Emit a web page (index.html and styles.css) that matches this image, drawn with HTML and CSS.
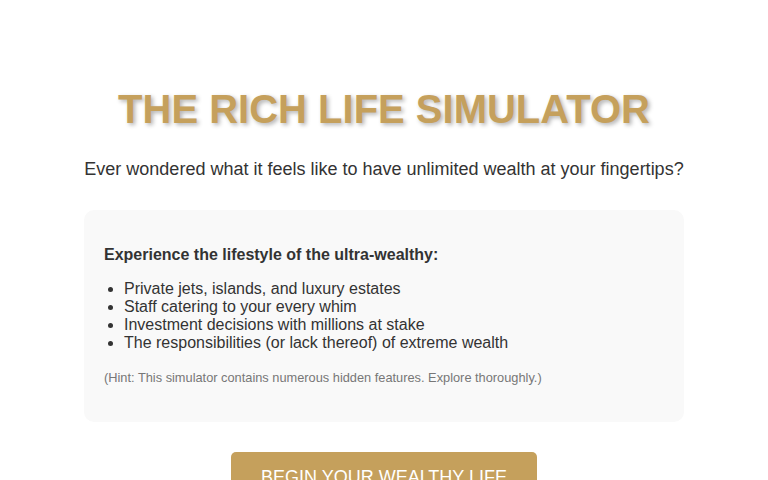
FILE: index.html
```html
<!DOCTYPE html>
<html lang="en">
<head>
  <meta charset="UTF-8" />
  <meta name="viewport" content="width=device-width, initial-scale=1.0" />
  <title>The Rich Life Simulator</title>
  <link rel="stylesheet" href="styles.css">
</head>
<body>

  <div class="container">
    <h1 class="title">THE RICH LIFE SIMULATOR</h1>

    <p class="subtitle">Ever wondered what it feels like to have unlimited wealth at your fingertips?</p>

    <div class="intro-card">
      <p class="intro-head"><b>Experience the lifestyle of the ultra-wealthy:</b></p>
      <ul class="perks">
        <li>Private jets, islands, and luxury estates</li>
        <li>Staff catering to your every whim</li>
        <li>Investment decisions with millions at stake</li>
        <li>The responsibilities (or lack thereof) of extreme wealth</li>
      </ul>
      <p class="hint">(Hint: This simulator contains numerous hidden features. Explore thoroughly.)</p>
    </div>

    <div class="start">
      <button class="start-btn">BEGIN YOUR WEALTHY LIFE</button>
    </div>
  </div>

</body>
</html>
```

FILE: styles.css
```css
* {
  box-sizing: border-box;
}

body {
  margin: 0;
  padding: 20px;
  font-family: "Liberation Sans", Arial, sans-serif;
  background: #fff;
  color: #333;
}

.container {
  max-width: 600px;
  margin: 0 auto;
  padding-top: 40px;
  text-align: center;
}

.title {
  margin: 27px 0;
  font-size: 40px;
  font-weight: bold;
  color: #c5a05c;
  text-shadow: 2px 2px 4px rgba(0, 0, 0, 0.3);
}

.subtitle {
  margin: 0 0 30px;
  font-size: 18px;
}

.intro-card {
  background: #f9f9f9;
  border-radius: 10px;
  padding: 20px;
  text-align: left;
}

.intro-head {
  margin: 16px 0;
  font-size: 16px;
}

.perks {
  margin: 16px 0;
  padding-left: 20px;
  font-size: 16px;
}

.hint {
  margin: 18px 0 17px;
  font-size: 12.8px;
  line-height: 15px;
  color: #777;
}

.start {
  margin-top: 30px;
}

.start-btn {
  background: #c5a05c;
  color: #fff;
  border: none;
  border-radius: 5px;
  padding: 15px 30px;
  font-family: "Liberation Sans", Arial, sans-serif;
  font-size: 18px;
  cursor: pointer;
}
```
